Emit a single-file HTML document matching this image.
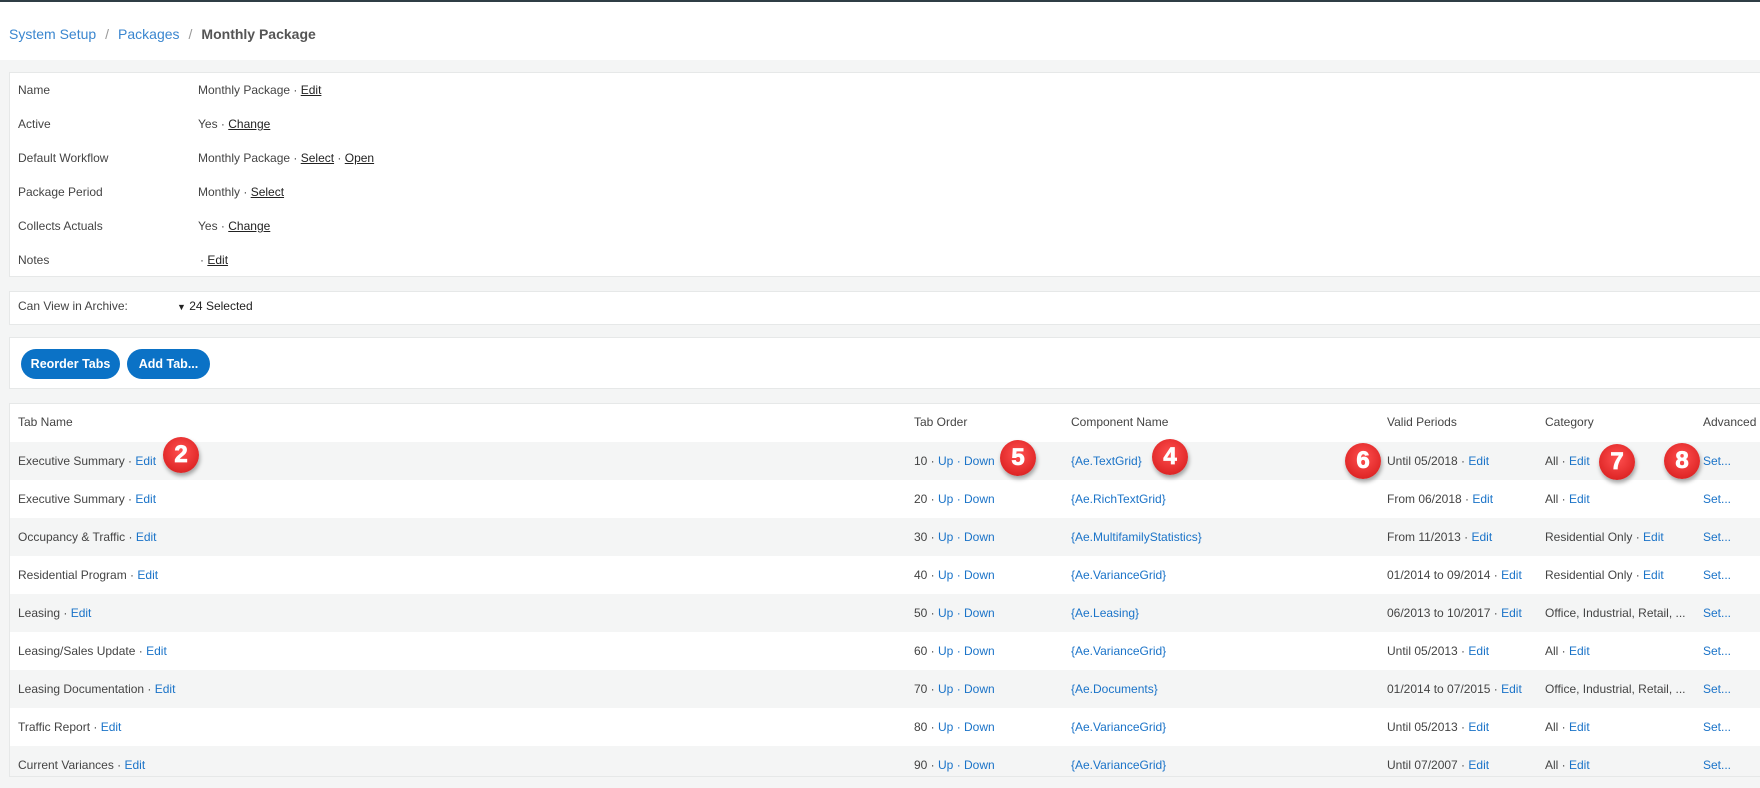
<!DOCTYPE html>
<html><head><meta charset="utf-8">
<style>
*{margin:0;padding:0;box-sizing:border-box}
body{width:1760px;height:788px;overflow:hidden;background:#f4f5f5;font-family:"Liberation Sans",sans-serif;font-size:12px;color:#444;position:relative}
.a{position:absolute;white-space:nowrap}
.top{position:absolute;left:0;top:0;width:1760px;height:60px;background:#fff;border-top:2px solid #2f3e45}
.bc{position:absolute;left:9px;top:26px;font-size:14px;color:#3a86cf}
.bc span.s{color:#999;margin:0 9px}
.bc b{color:#555;font-weight:bold}
.panel{position:absolute;left:9px;right:0;background:#fff;border:1px solid #e6e8e8;border-right:none}
u{color:#222}
.l{color:#1a73c8}
.btn{position:absolute;top:349px;height:30px;border-radius:15px;background:#0b72c6;color:#fff;font-weight:bold;font-size:12.5px;line-height:30px;text-align:center}
.row{position:absolute;left:10px;right:0;height:38px}
.g{background:#f4f5f5}
.bd{position:absolute;width:36px;height:36px;border-radius:50%;background:radial-gradient(circle at 50% 40%,#ff5050,#e02828 70%,#c01c1c);color:#fff;font-weight:900;font-size:24px;line-height:36px;text-align:center;box-shadow:1px 3px 4px rgba(0,0,0,.35);-webkit-text-stroke:0.8px #fff}
</style></head><body>
<div class="top"></div>
<div class="bc">System Setup<span class="s">/</span>Packages<span class="s">/</span><b>Monthly Package</b></div>

<div class="panel" style="top:72px;height:205px"></div>
<div class="a" style="left:18px;top:83px">Name</div><div class="a" style="left:198px;top:83px">Monthly Package · <u>Edit</u></div>
<div class="a" style="left:18px;top:117px">Active</div><div class="a" style="left:198px;top:117px">Yes · <u>Change</u></div>
<div class="a" style="left:18px;top:151px">Default Workflow</div><div class="a" style="left:198px;top:151px">Monthly Package · <u>Select</u> · <u>Open</u></div>
<div class="a" style="left:18px;top:185px">Package Period</div><div class="a" style="left:198px;top:185px">Monthly · <u>Select</u></div>
<div class="a" style="left:18px;top:219px">Collects Actuals</div><div class="a" style="left:198px;top:219px">Yes · <u>Change</u></div>
<div class="a" style="left:18px;top:253px">Notes</div><div class="a" style="left:200px;top:253px"> · <u>Edit</u></div>

<div class="panel" style="top:291px;height:34px"></div>
<div class="a" style="left:18px;top:299px">Can View in Archive:</div>
<div class="a" style="left:177px;top:299px;color:#222"><span style="font-size:9px">▼</span> 24 Selected</div>

<div class="panel" style="top:337px;height:52px"></div>
<div class="btn" style="left:21px;width:99px">Reorder Tabs</div>
<div class="btn" style="left:127px;width:83px">Add Tab...</div>

<div class="panel" style="top:403px;height:374px"></div>
<div class="a" style="left:18px;top:415px">Tab Name</div>
<div class="a" style="left:914px;top:415px">Tab Order</div>
<div class="a" style="left:1071px;top:415px">Component Name</div>
<div class="a" style="left:1387px;top:415px">Valid Periods</div>
<div class="a" style="left:1545px;top:415px">Category</div>
<div class="a" style="left:1703px;top:415px">Advanced</div>

<div class="row g" style="top:442px"></div>
<div class="row g" style="top:518px"></div>
<div class="row g" style="top:594px"></div>
<div class="row g" style="top:670px"></div>
<div class="row g" style="top:746px;height:30px"></div>

<div class="a" style="left:18px;top:454px">Executive Summary · <span class="l">Edit</span></div>
<div class="a" style="left:18px;top:492px">Executive Summary · <span class="l">Edit</span></div>
<div class="a" style="left:18px;top:530px">Occupancy &amp; Traffic · <span class="l">Edit</span></div>
<div class="a" style="left:18px;top:568px">Residential Program · <span class="l">Edit</span></div>
<div class="a" style="left:18px;top:606px">Leasing · <span class="l">Edit</span></div>
<div class="a" style="left:18px;top:644px">Leasing/Sales Update · <span class="l">Edit</span></div>
<div class="a" style="left:18px;top:682px">Leasing Documentation · <span class="l">Edit</span></div>
<div class="a" style="left:18px;top:720px">Traffic Report · <span class="l">Edit</span></div>
<div class="a" style="left:18px;top:758px">Current Variances · <span class="l">Edit</span></div>

<div class="a" style="left:914px;top:454px">10 · <span class="l">Up · Down</span></div>
<div class="a" style="left:914px;top:492px">20 · <span class="l">Up · Down</span></div>
<div class="a" style="left:914px;top:530px">30 · <span class="l">Up · Down</span></div>
<div class="a" style="left:914px;top:568px">40 · <span class="l">Up · Down</span></div>
<div class="a" style="left:914px;top:606px">50 · <span class="l">Up · Down</span></div>
<div class="a" style="left:914px;top:644px">60 · <span class="l">Up · Down</span></div>
<div class="a" style="left:914px;top:682px">70 · <span class="l">Up · Down</span></div>
<div class="a" style="left:914px;top:720px">80 · <span class="l">Up · Down</span></div>
<div class="a" style="left:914px;top:758px">90 · <span class="l">Up · Down</span></div>

<div class="a l" style="left:1071px;top:454px">{Ae.TextGrid}</div>
<div class="a l" style="left:1071px;top:492px">{Ae.RichTextGrid}</div>
<div class="a l" style="left:1071px;top:530px">{Ae.MultifamilyStatistics}</div>
<div class="a l" style="left:1071px;top:568px">{Ae.VarianceGrid}</div>
<div class="a l" style="left:1071px;top:606px">{Ae.Leasing}</div>
<div class="a l" style="left:1071px;top:644px">{Ae.VarianceGrid}</div>
<div class="a l" style="left:1071px;top:682px">{Ae.Documents}</div>
<div class="a l" style="left:1071px;top:720px">{Ae.VarianceGrid}</div>
<div class="a l" style="left:1071px;top:758px">{Ae.VarianceGrid}</div>

<div class="a" style="left:1387px;top:454px">Until 05/2018 · <span class="l">Edit</span></div>
<div class="a" style="left:1387px;top:492px">From 06/2018 · <span class="l">Edit</span></div>
<div class="a" style="left:1387px;top:530px">From 11/2013 · <span class="l">Edit</span></div>
<div class="a" style="left:1387px;top:568px">01/2014 to 09/2014 · <span class="l">Edit</span></div>
<div class="a" style="left:1387px;top:606px">06/2013 to 10/2017 · <span class="l">Edit</span></div>
<div class="a" style="left:1387px;top:644px">Until 05/2013 · <span class="l">Edit</span></div>
<div class="a" style="left:1387px;top:682px">01/2014 to 07/2015 · <span class="l">Edit</span></div>
<div class="a" style="left:1387px;top:720px">Until 05/2013 · <span class="l">Edit</span></div>
<div class="a" style="left:1387px;top:758px">Until 07/2007 · <span class="l">Edit</span></div>

<div class="a" style="left:1545px;top:454px">All · <span class="l">Edit</span></div>
<div class="a" style="left:1545px;top:492px">All · <span class="l">Edit</span></div>
<div class="a" style="left:1545px;top:530px">Residential Only · <span class="l">Edit</span></div>
<div class="a" style="left:1545px;top:568px">Residential Only · <span class="l">Edit</span></div>
<div class="a" style="left:1545px;top:606px">Office, Industrial, Retail, ...</div>
<div class="a" style="left:1545px;top:644px">All · <span class="l">Edit</span></div>
<div class="a" style="left:1545px;top:682px">Office, Industrial, Retail, ...</div>
<div class="a" style="left:1545px;top:720px">All · <span class="l">Edit</span></div>
<div class="a" style="left:1545px;top:758px">All · <span class="l">Edit</span></div>

<div class="a l" style="left:1703px;top:454px">Set...</div>
<div class="a l" style="left:1703px;top:492px">Set...</div>
<div class="a l" style="left:1703px;top:530px">Set...</div>
<div class="a l" style="left:1703px;top:568px">Set...</div>
<div class="a l" style="left:1703px;top:606px">Set...</div>
<div class="a l" style="left:1703px;top:644px">Set...</div>
<div class="a l" style="left:1703px;top:682px">Set...</div>
<div class="a l" style="left:1703px;top:720px">Set...</div>
<div class="a l" style="left:1703px;top:758px">Set...</div>

<div class="bd" style="left:163px;top:437px">2</div>
<div class="bd" style="left:1000px;top:440px">5</div>
<div class="bd" style="left:1152px;top:439px">4</div>
<div class="bd" style="left:1345px;top:443px">6</div>
<div class="bd" style="left:1599px;top:444px">7</div>
<div class="bd" style="left:1664px;top:443px">8</div>
</body></html>
